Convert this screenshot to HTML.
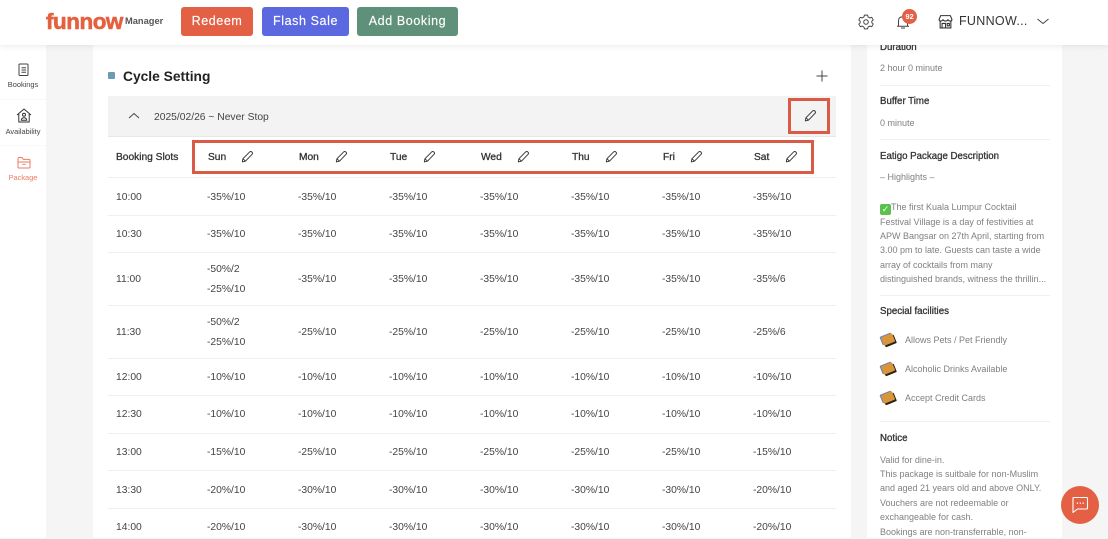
<!DOCTYPE html>
<html lang="en">
<head>
<meta charset="utf-8">
<title>Cycle Setting</title>
<style>
*{box-sizing:border-box}
html,body{margin:0;padding:0}
body{width:1108px;height:538px;overflow:hidden;position:relative;background:#f5f5f5;font-family:"Liberation Sans",sans-serif;color:#333}
.a{position:absolute;white-space:nowrap}
#main{position:absolute;left:93px;top:0;width:758px;height:538px;background:#fff}
#side{position:absolute;left:0;top:44px;width:46px;height:494px;background:#fff}
#right{position:absolute;left:867px;top:0;width:195px;height:538px;background:#fff}
#head{position:absolute;left:0;top:0;width:1108px;height:45px;background:#fff;box-shadow:0 1px 6px rgba(0,0,0,.09)}
.btn{position:absolute;top:7px;height:29px;border-radius:3px;color:#fff;font-size:12.5px;line-height:29px;text-align:center;letter-spacing:.6px;-webkit-text-stroke:.15px #fff}
.nav{position:absolute;left:0;width:46px;text-align:center;font-size:7.4px;color:#444}
.line{position:absolute;left:108px;width:728px;height:1px;background:#efefef}
.row{position:absolute;left:116px;display:grid;grid-template-columns:repeat(8,91px);font-size:10.3px;line-height:20px;color:#444;white-space:nowrap}
.h{position:absolute;top:152px;font-size:10.2px;line-height:12px;color:#333;-webkit-text-stroke:.3px #333}
.p{position:absolute}
.t{position:absolute;left:880px;font-size:9.7px;color:#333;-webkit-text-stroke:.3px #333;white-space:nowrap;line-height:12px}
.s{position:absolute;left:880px;font-size:9px;color:#808080;white-space:nowrap;line-height:14.4px}
.rl{position:absolute;left:880px;width:170px;height:1px;background:#f0f0f0}
.wal{position:absolute;left:882px;width:12px;height:9px;background:#d9953a;border-radius:1px;transform:rotate(-22deg);box-shadow:1px 2px 0 #2c2118,-1px -1px 0 #6f83b5}
.red{position:absolute;border:3.5px solid #d95a45}
</style>
</head>
<body>
<div id="main"></div>
<div id="right"></div>
<div id="side"></div>

<!-- Main title -->
<div class="a" style="left:108px;top:72px;width:7px;height:7px;background:#6a9cb5;border-radius:1px"></div>
<div class="a" style="left:123px;top:68px;font-size:13.8px;line-height:17px;font-weight:bold;color:#222">Cycle Setting</div>
<svg class="p" style="left:815px;top:69px" width="14" height="14" viewBox="0 0 14 14"><path d="M7 1.5V12.5M1.5 7H12.5" stroke="#444" stroke-width="1" fill="none"/></svg>

<!-- Cycle bar -->
<div class="a" style="left:108px;top:96px;width:728px;height:40px;background:#f3f3f3"></div>
<svg class="p" style="left:127px;top:111px" width="14" height="9" viewBox="0 0 14 9"><path d="M2 7L7 2.5L12 7" stroke="#444" stroke-width="1" fill="none"/></svg>
<div class="a" style="left:154px;top:111px;font-size:10.3px;line-height:13px;color:#444">2025/02/26 ~ Never Stop</div>

<div class="line" style="top:136px;background:#e8e8e8"></div>
<div class="line" style="top:177px"></div>
<div class="line" style="top:215px"></div>
<div class="line" style="top:252px"></div>
<div class="line" style="top:305px"></div>
<div class="line" style="top:358px"></div>
<div class="line" style="top:395px"></div>
<div class="line" style="top:433px"></div>
<div class="line" style="top:470px"></div>
<div class="line" style="top:508px"></div>

<!-- Table header -->
<div class="h" style="left:116px">Booking Slots</div>
<div class="h" style="left:208px">Sun</div>
<div class="h" style="left:299px">Mon</div>
<div class="h" style="left:390px">Tue</div>
<div class="h" style="left:481px">Wed</div>
<div class="h" style="left:572px">Thu</div>
<div class="h" style="left:663px">Fri</div>
<div class="h" style="left:754px">Sat</div>

<svg width="0" height="0" style="position:absolute"><defs><symbol id="pen" viewBox="0 0 12 12"><path d="M1.2 11L1.8 8L8 1.8Q9 .9 10.1 1.9Q11.1 3 10.2 4L4.1 10.3ZM1.8 8L4.1 10.3" stroke="#333" stroke-width=".85" fill="none" stroke-linejoin="round"/></symbol></defs></svg>
<svg class="p" style="left:241px;top:150px" width="13" height="13"><use href="#pen"/></svg>
<svg class="p" style="left:335px;top:150px" width="13" height="13"><use href="#pen"/></svg>
<svg class="p" style="left:423px;top:150px" width="13" height="13"><use href="#pen"/></svg>
<svg class="p" style="left:517px;top:150px" width="13" height="13"><use href="#pen"/></svg>
<svg class="p" style="left:605px;top:150px" width="13" height="13"><use href="#pen"/></svg>
<svg class="p" style="left:690px;top:150px" width="13" height="13"><use href="#pen"/></svg>
<svg class="p" style="left:785px;top:150px" width="13" height="13"><use href="#pen"/></svg>
<svg class="p" style="left:804px;top:109px" width="13" height="13"><use href="#pen"/></svg>

<!-- Highlight boxes -->
<div class="red" style="left:192px;top:140px;width:622px;height:34px"></div>
<div class="red" style="left:788px;top:98px;width:42px;height:36px"></div>

<!-- Rows -->
<div class="row" style="top:188px"><span>10:00</span><span>-35%/10</span><span>-35%/10</span><span>-35%/10</span><span>-35%/10</span><span>-35%/10</span><span>-35%/10</span><span>-35%/10</span></div>
<div class="row" style="top:225px"><span>10:30</span><span>-35%/10</span><span>-35%/10</span><span>-35%/10</span><span>-35%/10</span><span>-35%/10</span><span>-35%/10</span><span>-35%/10</span></div>
<div class="row" style="top:260px;align-items:center"><span>11:00</span><span>-50%/2<br>-25%/10</span><span>-35%/10</span><span>-35%/10</span><span>-35%/10</span><span>-35%/10</span><span>-35%/10</span><span>-35%/6</span></div>
<div class="row" style="top:313px;align-items:center"><span>11:30</span><span>-50%/2<br>-25%/10</span><span>-25%/10</span><span>-25%/10</span><span>-25%/10</span><span>-25%/10</span><span>-25%/10</span><span>-25%/6</span></div>
<div class="row" style="top:368px"><span>12:00</span><span>-10%/10</span><span>-10%/10</span><span>-10%/10</span><span>-10%/10</span><span>-10%/10</span><span>-10%/10</span><span>-10%/10</span></div>
<div class="row" style="top:405px"><span>12:30</span><span>-10%/10</span><span>-10%/10</span><span>-10%/10</span><span>-10%/10</span><span>-10%/10</span><span>-10%/10</span><span>-10%/10</span></div>
<div class="row" style="top:443px"><span>13:00</span><span>-15%/10</span><span>-25%/10</span><span>-25%/10</span><span>-25%/10</span><span>-25%/10</span><span>-25%/10</span><span>-15%/10</span></div>
<div class="row" style="top:481px"><span>13:30</span><span>-20%/10</span><span>-30%/10</span><span>-30%/10</span><span>-30%/10</span><span>-30%/10</span><span>-30%/10</span><span>-20%/10</span></div>
<div class="row" style="top:518px"><span>14:00</span><span>-20%/10</span><span>-30%/10</span><span>-30%/10</span><span>-30%/10</span><span>-30%/10</span><span>-30%/10</span><span>-20%/10</span></div>

<!-- Right panel -->
<div class="t" style="top:42px">Duration</div>
<div class="s" style="top:61px">2 hour 0 minute</div>
<div class="rl" style="top:85px"></div>
<div class="t" style="top:96px">Buffer Time</div>
<div class="s" style="top:116px">0 minute</div>
<div class="rl" style="top:139px"></div>
<div class="t" style="top:151px">Eatigo Package Description</div>
<div class="s" style="top:170px">– Highlights –</div>
<div class="s" style="top:199.5px"><span style="display:inline-block;width:11px;height:11px;background:#5cc04e;border-radius:2px;color:#fff;font-size:9px;line-height:11px;text-align:center;vertical-align:-2px">✓</span>The first Kuala Lumpur Cocktail<br>Festival Village is a day of festivities at<br>APW Bangsar on 27th April, starting from<br>3.00 pm to late. Guests can taste a wide<br>array of cocktails from many<br>distinguished brands, witness the thrillin...</div>
<div class="rl" style="top:295px"></div>
<div class="t" style="top:306px">Special facilities</div>
<div class="wal" style="top:335px"></div>
<div class="s" style="left:905px;top:333px">Allows Pets / Pet Friendly</div>
<div class="wal" style="top:364px"></div>
<div class="s" style="left:905px;top:362px">Alcoholic Drinks Available</div>
<div class="wal" style="top:393px"></div>
<div class="s" style="left:905px;top:391px">Accept Credit Cards</div>
<div class="rl" style="top:421px"></div>
<div class="t" style="top:433px">Notice</div>
<div class="s" style="top:452.5px">Valid for dine-in.<br>This package is suitbale for non-Muslim<br>and aged 21 years old and above ONLY.<br>Vouchers are not redeemable or<br>exchangeable for cash.<br>Bookings are non-transferrable, non-</div>

<!-- Sidebar -->
<svg class="p" style="left:16px;top:62px" width="15" height="15" viewBox="0 0 14 15"><path d="M3 2H10.5Q11.5 2 11.5 3V12.5Q11.5 13.5 10.5 13.5H3.5Q2.5 13.5 2.5 12.5V2.5ZM5 5.8H9.5M5 8H9.5M5 10.2H9.5" stroke="#444" stroke-width="1" fill="none"/></svg>
<div class="nav" style="top:80px">Bookings</div>
<div class="a" style="left:0;top:99px;width:46px;height:1px;background:#f9f9f9"></div>
<svg class="p" style="left:16px;top:108px" width="16" height="15" viewBox="0 0 16 15"><path d="M1 7L8 1L15 7M2.8 6V14H13.2V6M5.3 12.3Q5.5 9.8 8 9.8Q10.5 9.8 10.7 12.3ZM8 5.2A1.5 1.5 0 1 0 8 8.2A1.5 1.5 0 1 0 8 5.2Z" stroke="#333" stroke-width="1" fill="none"/></svg>
<div class="nav" style="top:127px">Availability</div>
<div class="a" style="left:0;top:145px;width:46px;height:1px;background:#f9f9f9"></div>
<svg class="p" style="left:17px;top:156px" width="14" height="13" viewBox="0 0 14 13"><path d="M1 3V11Q1 12 2 12H12Q13 12 13 11V4.2Q13 3.4 12 3.4H6.2L5 1.5H2Q1 1.5 1 3ZM1 6H13M5.5 8.2H8.5" stroke="#ef7a62" stroke-width="1" fill="none"/></svg>
<div class="nav" style="top:173px;color:#ef7a62">Package</div>

<!-- Header -->
<div id="head"></div>
<div class="a" style="left:46px;top:9px;font-size:22.4px;line-height:26px;font-weight:bold;color:#e5603f;letter-spacing:-.45px;-webkit-text-stroke:.6px #e5603f">funnow</div>
<div class="a" style="left:125px;top:16px;font-size:9.3px;line-height:11px;color:#555;font-weight:bold">Manager</div>
<div class="btn" style="left:181px;width:72px;background:#e46044">Redeem</div>
<div class="btn" style="left:262px;width:87px;background:#5b68e0">Flash Sale</div>
<div class="btn" style="left:357px;width:101px;background:#5f9079">Add Booking</div>

<svg class="p" style="left:858px;top:14px" width="16" height="16" viewBox="0 0 14 14"><path d="M5.6 1H8.4L8.8 2.6L10.4 3.4L12 2.9L13.3 5.2L12.1 6.3V7.7L13.3 8.8L12 11.1L10.4 10.6L8.8 11.4L8.4 13H5.6L5.2 11.4L3.6 10.6L2 11.1L.7 8.8L1.9 7.7V6.3L.7 5.2L2 2.9L3.6 3.4L5.2 2.6Z" stroke="#444" stroke-width=".85" fill="none" stroke-linejoin="round"/><circle cx="7" cy="7" r="2" stroke="#444" stroke-width=".85" fill="none"/></svg>
<svg class="p" style="left:896px;top:15px" width="14" height="14" viewBox="0 0 14 14"><path d="M2.5 11V6Q2.5 1.8 7 1.8Q11.5 1.8 11.5 6V11M1 11.2H13M5 13H9" stroke="#444" stroke-width="1" fill="none"/></svg>
<div class="a" style="left:902px;top:9px;width:15px;height:15px;border-radius:50%;background:#e46044;color:#fff;font-size:7.5px;font-weight:bold;line-height:15px;text-align:center">92</div>
<svg class="p" style="left:938px;top:14px" width="15" height="15" viewBox="0 0 14 14"><path d="M2.5 1.5H11.5L13 5Q13 6.6 11.5 6.6Q10 6.6 9.3 5.4Q8.5 6.6 7 6.6Q5.5 6.6 4.7 5.4Q4 6.6 2.5 6.6Q1 6.6 1 5ZM2 6.6V13H12V6.6M3.8 13V8.8H7V13M8.6 8.8H10.6V11H8.6Z" stroke="#333" stroke-width="1" fill="none"/></svg>
<div class="a" style="left:959px;top:14px;font-size:12.5px;line-height:15px;letter-spacing:.3px;color:#333">FUNNOW...</div>
<svg class="p" style="left:1036px;top:17px" width="14" height="9" viewBox="0 0 14 9"><path d="M1.5 2L7 6.5L12.5 2" stroke="#444" stroke-width="1" fill="none"/></svg>

<!-- Chat button -->
<div class="a" style="left:1061px;top:486px;width:38px;height:38px;border-radius:50%;background:#e46044"></div>
<svg class="p" style="left:1071px;top:496px" width="18" height="18" viewBox="0 0 18 18"><path d="M2.5 1.5H15.5Q16.5 1.5 16.5 2.5V12Q16.5 13 15.5 13H6.5L2 16.5V2.5Q2 1.5 2.5 1.5Z" stroke="#fff" stroke-width="1.1" fill="none" stroke-linejoin="round"/><path d="M5.8 7.2H7M8.7 7.2H9.9M11.6 7.2H12.8" stroke="#fff" stroke-width="1.4"/></svg>
</body>
</html>
